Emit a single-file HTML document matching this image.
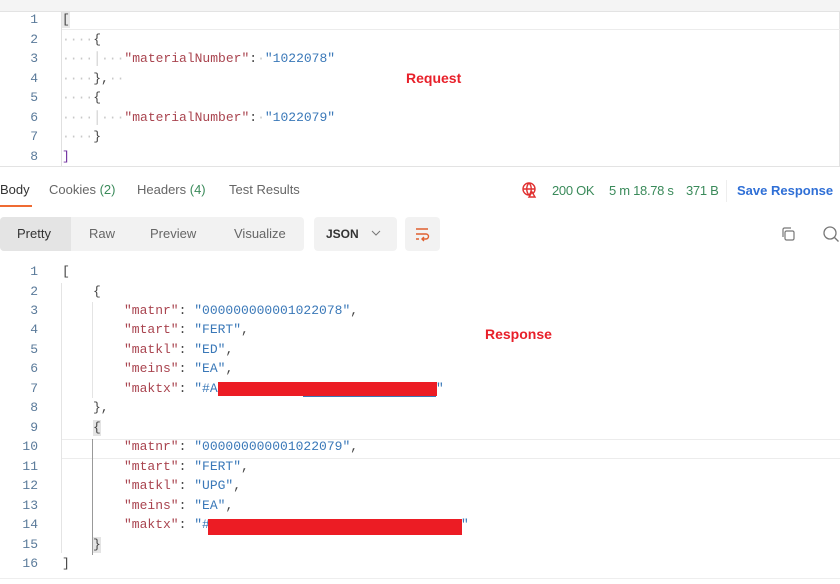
<!DOCTYPE html>
<html><head><meta charset="utf-8"><style>
*{margin:0;padding:0;box-sizing:border-box}
body{width:840px;height:584px;background:#fff;position:relative;overflow:hidden;font-family:"Liberation Sans",sans-serif}
.m{font-family:"Liberation Mono",monospace;font-size:13px;position:absolute;white-space:pre;line-height:16px}
.n{color:#5a7a9a;text-align:right;width:28px;left:10px}
.k{color:#a9444f}.v{color:#3a78b8}.p{color:#444}.d{color:#c8c8c8}
.a{position:absolute}
</style></head><body>
<div class="a" style="left:0;top:0;width:840px;height:11px;background:#f4f4f4"></div>
<div class="a" style="left:0;top:11px;width:840px;height:156px;border:1px solid #e3e3e3;border-left:none;background:#fff"></div>
<div class="a" style="left:61px;top:12px;width:779px;height:154px;border-left:1px solid #e0e0e0"></div>
<div class="a" style="left:62px;top:12px;width:778px;height:18px;border-bottom:1px solid #ececec"></div>
<div class="m n" style="top:12px">1</div><div class="m n" style="top:32px">2</div><div class="m n" style="top:51px">3</div><div class="m n" style="top:71px">4</div><div class="m n" style="top:90px">5</div><div class="m n" style="top:110px">6</div><div class="m n" style="top:129px">7</div><div class="m n" style="top:149px">8</div>
<div class="m p" style="left:62px;top:12px;background:#e8e8e8">[</div>
<div class="m" style="left:62px;top:32px"><span class="d">····</span><span class="p">{</span></div>
<div class="m" style="left:62px;top:51px"><span class="d">····│···</span><span class="k">"materialNumber"</span><span class="p">:</span><span class="d">·</span><span class="v">"1022078"</span></div>
<div class="m" style="left:62px;top:71px"><span class="d">····</span><span class="p">},</span><span class="d">··</span></div>
<div class="m" style="left:62px;top:90px"><span class="d">····</span><span class="p">{</span></div>
<div class="m" style="left:62px;top:110px"><span class="d">····│···</span><span class="k">"materialNumber"</span><span class="p">:</span><span class="d">·</span><span class="v">"1022079"</span></div>
<div class="m" style="left:62px;top:129px"><span class="d">····</span><span class="p">}</span></div>
<div class="m p" style="left:62px;top:149px;color:#7030a0">]</div>
<div class="a" style="left:406px;top:70px;color:#e8202a;font-weight:bold;font-size:14px">Request</div>

<div class="a" style="left:0;top:182px;font-size:13px;color:#333">Body</div>
<div class="a" style="left:0;top:205px;width:32px;height:2px;background:#ef6b32"></div>
<div class="a" style="left:49px;top:182px;font-size:13px;color:#666">Cookies <span style="color:#3a8a5a">(2)</span></div>
<div class="a" style="left:137px;top:182px;font-size:13px;color:#666">Headers <span style="color:#3a8a5a">(4)</span></div>
<div class="a" style="left:229px;top:182px;font-size:13px;color:#666">Test Results</div>
<svg class="a" style="left:522px;top:182px" width="16" height="16" viewBox="0 0 16 16" fill="none" stroke="#e03030" stroke-width="1.4"><circle cx="7" cy="7" r="6"/><path d="M1 7h12M7 1c-3 3-3 9 0 12M7 1c3 3 3 9 0 12"/><path d="M10 10l3 5h-6z" fill="#fff"/></svg>
<div class="a" style="left:552px;top:183px;font-size:13px;color:#3a8a5a;letter-spacing:-0.3px">200 OK</div>
<div class="a" style="left:609px;top:183px;font-size:13px;color:#3a8a5a;letter-spacing:-0.3px">5 m 18.78 s</div>
<div class="a" style="left:686px;top:183px;font-size:13px;color:#3a8a5a;letter-spacing:-0.3px">371 B</div>
<div class="a" style="left:726px;top:180px;width:1px;height:22px;background:#eee"></div>
<div class="a" style="left:737px;top:183px;font-size:13px;color:#2f6fd6;font-weight:bold">Save Response</div>

<div class="a" style="left:0;top:217px;width:304px;height:34px;background:#f2f2f2;border-radius:4px"></div>
<div class="a" style="left:0;top:217px;width:71px;height:34px;background:#e4e4e4;border-radius:4px 0 0 4px"></div>
<div class="a" style="left:17px;top:226px;font-size:13px;color:#333">Pretty</div>
<div class="a" style="left:89px;top:226px;font-size:13px;color:#666">Raw</div>
<div class="a" style="left:150px;top:226px;font-size:13px;color:#666">Preview</div>
<div class="a" style="left:234px;top:226px;font-size:13px;color:#666">Visualize</div>
<div class="a" style="left:314px;top:217px;width:83px;height:34px;background:#f2f2f2;border-radius:4px"></div>
<div class="a" style="left:326px;top:227px;font-size:12px;color:#333;font-weight:bold">JSON</div>
<svg class="a" style="left:371px;top:229px" width="10" height="8"><path d="M1 2l4 4 4-4" stroke="#777" fill="none"/></svg>
<div class="a" style="left:405px;top:217px;width:35px;height:34px;background:#f2f2f2;border-radius:4px"></div>
<svg class="a" style="left:414px;top:226px" width="16" height="16" fill="none" stroke="#e06030" stroke-width="1.4"><path d="M2 3h12M2 8h10a2.5 2.5 0 010 5H8M10 11l-2 2 2 2M2 13h3"/></svg>
<svg class="a" style="left:780px;top:226px" width="16" height="16" fill="none" stroke="#777" stroke-width="1.2"><rect x="5" y="5" width="9" height="9" rx="1.5"/><path d="M3 11V3.5A1.5 1.5 0 014.5 2H11"/></svg>
<svg class="a" style="left:822px;top:225px" width="18" height="18" fill="none" stroke="#777" stroke-width="1.3"><circle cx="8" cy="8" r="6"/><path d="M12.5 12.5l4 4"/></svg>

<div class="a" style="left:61px;top:439px;width:779px;height:20px;border-top:1px solid #ececec;border-bottom:1px solid #ececec"></div>
<div class="a" style="left:61px;top:283px;width:1px;height:270px;background:#e4e4e4"></div>
<div class="a" style="left:92px;top:302px;width:1px;height:96px;background:#e4e4e4"></div>
<div class="a" style="left:92px;top:439px;width:1px;height:116px;background:#999"></div>
<div class="m n" style="top:264px">1</div><div class="m n" style="top:284px">2</div><div class="m n" style="top:303px">3</div><div class="m n" style="top:322px">4</div><div class="m n" style="top:342px">5</div><div class="m n" style="top:361px">6</div><div class="m n" style="top:381px">7</div><div class="m n" style="top:400px">8</div><div class="m n" style="top:420px">9</div><div class="m n" style="top:439px">10</div><div class="m n" style="top:459px">11</div><div class="m n" style="top:478px">12</div><div class="m n" style="top:498px">13</div><div class="m n" style="top:517px">14</div><div class="m n" style="top:537px">15</div><div class="m n" style="top:556px">16</div>
<div class="m p" style="left:62px;top:264px">[</div>
<div class="m p" style="left:93px;top:284px">{</div>
<div class="m" style="left:124px;top:303px"><span class="k">"matnr"</span><span class="p">: </span><span class="v">"000000000001022078"</span><span class="p">,</span></div>
<div class="m" style="left:124px;top:322px"><span class="k">"mtart"</span><span class="p">: </span><span class="v">"FERT"</span><span class="p">,</span></div>
<div class="m" style="left:124px;top:342px"><span class="k">"matkl"</span><span class="p">: </span><span class="v">"ED"</span><span class="p">,</span></div>
<div class="m" style="left:124px;top:361px"><span class="k">"meins"</span><span class="p">: </span><span class="v">"EA"</span><span class="p">,</span></div>
<div class="m" style="left:124px;top:381px"><span class="k">"maktx"</span><span class="p">: </span><span class="v">"#A</span></div>
<div class="a" style="left:303px;top:396px;width:133px;height:1px;background:#3a78b8"></div>
<div class="a" style="left:218px;top:382px;width:219px;height:14px;background:#ec1c24"></div>
<div class="m v" style="left:436px;top:381px">"</div>
<div class="m p" style="left:93px;top:400px">},</div>
<div class="m p" style="left:93px;top:420px;background:#e4e4e4">{</div>
<div class="m" style="left:124px;top:439px"><span class="k">"matnr"</span><span class="p">: </span><span class="v">"000000000001022079"</span><span class="p">,</span></div>
<div class="m" style="left:124px;top:459px"><span class="k">"mtart"</span><span class="p">: </span><span class="v">"FERT"</span><span class="p">,</span></div>
<div class="m" style="left:124px;top:478px"><span class="k">"matkl"</span><span class="p">: </span><span class="v">"UPG"</span><span class="p">,</span></div>
<div class="m" style="left:124px;top:498px"><span class="k">"meins"</span><span class="p">: </span><span class="v">"EA"</span><span class="p">,</span></div>
<div class="m" style="left:124px;top:517px"><span class="k">"maktx"</span><span class="p">: </span><span class="v">"#</span></div>
<div class="a" style="left:208px;top:519px;width:254px;height:16px;background:#ec1c24"></div>
<div class="m v" style="left:461px;top:517px">"</div>
<div class="m p" style="left:93px;top:537px;background:#e4e4e4">}</div>
<div class="m p" style="left:62px;top:556px">]</div>
<div class="a" style="left:485px;top:326px;color:#e8202a;font-weight:bold;font-size:14px">Response</div>
<div class="a" style="left:0;top:578px;width:840px;height:1px;background:#eee"></div>
</body></html>
